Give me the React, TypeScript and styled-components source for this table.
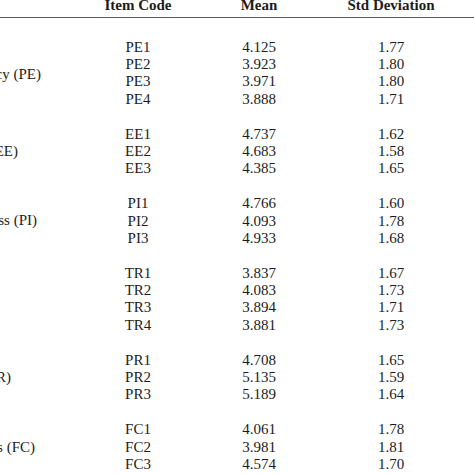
import React from "react";
import styled, { createGlobalStyle } from "styled-components";

const Global = createGlobalStyle`
  html, body {
    margin: 0;
    padding: 0;
    background: #ffffff;
    overflow: hidden;
  }
  body {
    font-family: "Liberation Serif", "Times New Roman", serif;
    color: #1c1c1c;
  }
`;

const COLS = "88px 100px 142px 122px";

const Page = styled.div`
  width: 474px;
  height: 474px;
  overflow: hidden;
  display: flex;
  flex-direction: column;
`;

const HeaderRow = styled.div`
  display: grid;
  grid-template-columns: ${COLS};
  font-size: 15px;
  font-weight: 700;
  line-height: 10px;
  padding-bottom: 7px;
  border-bottom: 1.5px solid #5a5a5a;
`;

const HeadCell = styled.div`
  text-align: center;
  white-space: nowrap;
`;

const Body = styled.div`
  display: flex;
  flex-direction: column;
  gap: 17.4px;
  padding-top: 20.6px;
`;

const Group = styled.div`
  display: grid;
  grid-template-columns: ${COLS};
  grid-auto-rows: 17.4px;
  font-size: 15px;
  line-height: 17.4px;
`;

const LabelCell = styled.div<{ $rows: number; $end: number }>`
  grid-column: 1;
  grid-row: 1 / span ${(p) => p.$rows};
  align-self: center;
  justify-self: start;
  width: ${(p) => p.$end}px;
  display: flex;
  justify-content: flex-end;
  overflow: hidden;
  white-space: nowrap;
  margin-top: ${(p) => (p.$rows % 2 === 0 ? 3 : 0)}px;
`;

const Cell = styled.div`
  text-align: center;
  white-space: nowrap;
`;

type Item = [string, string, string];
type GroupData = { label: string; end: number; items: Item[] };

const groups: GroupData[] = [
  {
    label: "cy (PE)",
    end: 41,
    items: [
      ["PE1", "4.125", "1.77"],
      ["PE2", "3.923", "1.80"],
      ["PE3", "3.971", "1.80"],
      ["PE4", "3.888", "1.71"],
    ],
  },
  {
    label: "EE)",
    end: 18,
    items: [
      ["EE1", "4.737", "1.62"],
      ["EE2", "4.683", "1.58"],
      ["EE3", "4.385", "1.65"],
    ],
  },
  {
    label: "ss (PI)",
    end: 37,
    items: [
      ["PI1", "4.766", "1.60"],
      ["PI2", "4.093", "1.78"],
      ["PI3", "4.933", "1.68"],
    ],
  },
  {
    label: "",
    end: 0,
    items: [
      ["TR1", "3.837", "1.67"],
      ["TR2", "4.083", "1.73"],
      ["TR3", "3.894", "1.71"],
      ["TR4", "3.881", "1.73"],
    ],
  },
  {
    label: "R)",
    end: 11,
    items: [
      ["PR1", "4.708", "1.65"],
      ["PR2", "5.135", "1.59"],
      ["PR3", "5.189", "1.64"],
    ],
  },
  {
    label: "s (FC)",
    end: 35,
    items: [
      ["FC1", "4.061", "1.78"],
      ["FC2", "3.981", "1.81"],
      ["FC3", "4.574", "1.70"],
    ],
  },
];

export default function App() {
  return (
    <>
      <Global />
      <Page>
        <HeaderRow>
          <HeadCell />
          <HeadCell>Item Code</HeadCell>
          <HeadCell>Mean</HeadCell>
          <HeadCell>Std Deviation</HeadCell>
        </HeaderRow>
        <Body>
          {groups.map((g, gi) => (
            <Group key={gi}>
              <LabelCell $rows={g.items.length} $end={g.end}>
                {g.label}
              </LabelCell>
              {g.items.map((it) => (
                <React.Fragment key={it[0]}>
                  <Cell>{it[0]}</Cell>
                  <Cell>{it[1]}</Cell>
                  <Cell>{it[2]}</Cell>
                </React.Fragment>
              ))}
            </Group>
          ))}
        </Body>
      </Page>
    </>
  );
}
